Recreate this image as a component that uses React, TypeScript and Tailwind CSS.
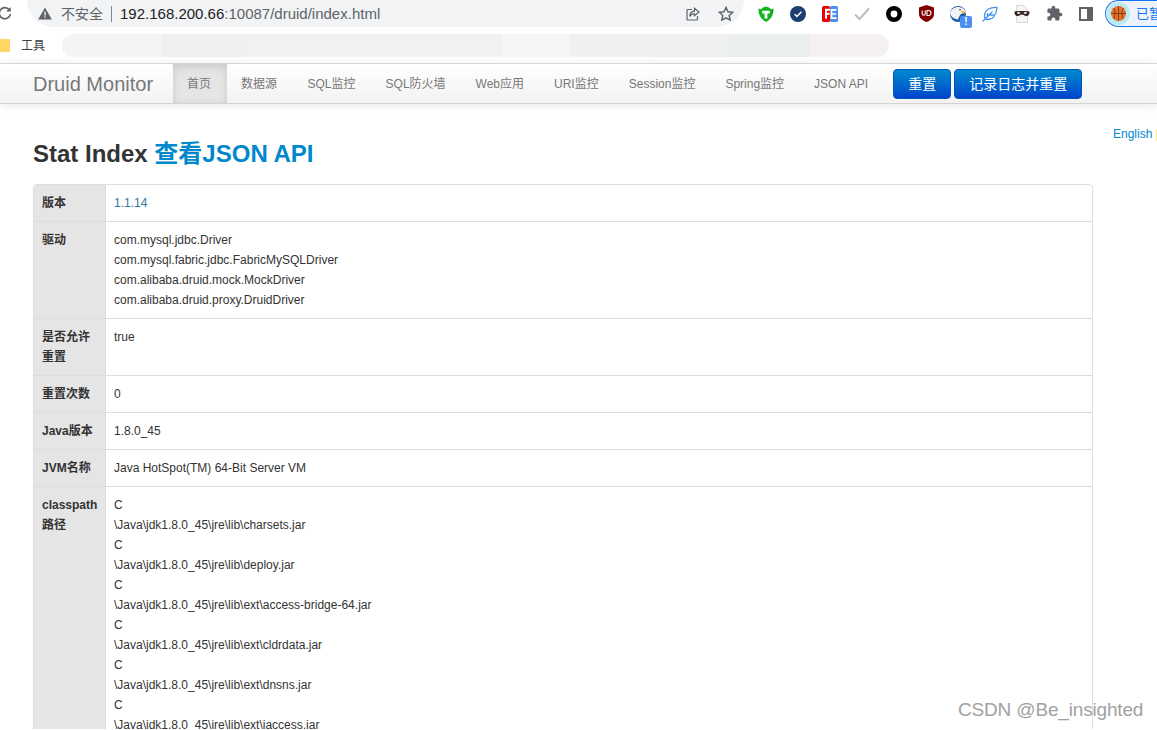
import React from "react";

const FONT = "font-['Liberation_Sans','Noto_Sans_CJK_SC',Arial,sans-serif]";

const tabs = ["首页", "数据源", "SQL监控", "SQL防火墙", "Web应用", "URI监控", "Session监控", "Spring监控", "JSON API"];

const Row = ({ label, lines, blue }: { label: string[]; lines: string[]; blue?: boolean }) => (
  <div className="flex border-t border-[#dddddd] first:border-t-0">
    <div className="w-[72px] shrink-0 bg-[#e5e5e5] p-2 border-r border-[#dddddd] font-bold">
      {label.map((l) => (
        <div key={l}>{l}</div>
      ))}
    </div>
    <div className={"flex-1 p-2 " + (blue ? "text-[#33779f]" : "")}>
      {lines.map((l, i) => (
        <div key={i}>{l}</div>
      ))}
    </div>
  </div>
);

const jars = ["charsets.jar", "deploy.jar", "ext\\access-bridge-64.jar", "ext\\cldrdata.jar", "ext\\dnsns.jar", "ext\\jaccess.jar"];
const cp = jars.flatMap((j) => ["C", "\\Java\\jdk1.8.0_45\\jre\\lib\\" + j]);

const Cell = ({ children }: { children: React.ReactNode }) => (
  <div className="flex h-[27px] w-[32px] shrink-0 items-center justify-center">{children}</div>
);

export default function App() {
  return (
    <div className={"relative h-[729px] w-[1157px] overflow-hidden bg-white text-[12px] leading-5 text-[#333333] " + FONT}>
      {/* browser toolbar */}
      <div className="flex h-[28px] items-start bg-white">
        <svg width="14" height="14" viewBox="0 0 14 14" className="-ml-[2px] mr-[15px] mt-[6px] shrink-0">
          <path d="M11.6 4.2A5.6 5.6 0 1 0 12.4 8" fill="none" stroke="#5f6368" strokeWidth="1.7" />
          <path d="M12.8 1v4.6H8.2z" fill="#5f6368" />
        </svg>
        <div className="flex h-[27px] w-[717px] shrink-0 items-center rounded-b-full rounded-t-[10px] bg-[#f1f3f4] pl-[11px] pr-[10px]">
          <svg width="14" height="13" viewBox="0 0 14 13" className="shrink-0">
            <path d="M7 0.5 13.8 12.5H0.2z" fill="#5f6368" />
            <rect x="6.3" y="4.5" width="1.4" height="4" fill="#f1f3f4" />
            <rect x="6.3" y="9.4" width="1.4" height="1.4" fill="#f1f3f4" />
          </svg>
          <span className="ml-[9px] text-[14px] leading-none text-[#5f6368]">不安全</span>
          <span className="ml-[8px] mr-[8px] h-[16px] w-px bg-[#80868b]" />
          <span className="text-[15px] leading-none text-[#202124]">192.168.200.66</span>
          <span className="text-[15px] leading-none text-[#5f6368]">:10087/druid/index.html</span>
          <div className="ml-auto flex items-center gap-[18px]">
            <svg width="14" height="14" viewBox="0 0 14 14" fill="none" stroke="#5f6368" strokeWidth="1.2">
              <path d="M6 2.5H2a1 1 0 0 0-1 1V12a1 1 0 0 0 1 1h8.5a1 1 0 0 0 1-1V9" />
              <path d="M8.5 1.2 13 5l-4.5 3.8V6.8C6 6.8 4.6 7.7 3.8 9.6c0-3.2 1.6-5.2 4.7-5.5z" />
            </svg>
            <svg width="16" height="15" viewBox="0 0 16 15" fill="none" stroke="#5f6368" strokeWidth="1.4">
              <path d="M8 1.4 10 5.8l4.7.5-3.5 3.2 1 4.7L8 11.8l-4.2 2.4 1-4.7L1.3 6.3 6 5.8z" />
            </svg>
          </div>
        </div>
        <div className="ml-[6px] flex shrink-0">
          <Cell>
            <svg width="16" height="16" viewBox="0 0 16 16">
              <path d="M0.500 2.500 3 3.200 5 1.500 8 0.500 11 1.500 13 3.200 15.500 2.500C15.800 9 13 13 8 16 3 13 .2 9 .5 2.500z" fill="#12b41e" />
              <path d="M4.200 4.800h7.600v2.600H9.400V12.500H6.600V7.400H4.200z" fill="#ffffff" />
            </svg>
          </Cell>
          <Cell>
            <svg width="16" height="16" viewBox="0 0 16 16">
              <circle cx="8" cy="8" r="8" fill="#1b3f6e" />
              <path d="M4.600 8.200 7 10.400l4.400-4.600" fill="none" stroke="#ffffff" strokeWidth="1.500" />
            </svg>
          </Cell>
          <Cell>
            <svg width="16" height="16" viewBox="0 0 16 16">
              <rect width="8" height="16" rx="1.500" fill="#f00000" />
              <rect x="8" width="8" height="16" rx="1.500" fill="#4d8ff0" />
              <path d="M3 3.800h5M4 3.800v9M4 7.800h3.500" stroke="#ffffff" strokeWidth="2" fill="none" />
              <path d="M14.500 3.800H9.500v8.400h5M9.500 8h4.500" stroke="#ffffff" strokeWidth="1.700" fill="none" />
            </svg>
          </Cell>
          <Cell>
            <svg width="16" height="14" viewBox="0 0 16 14">
              <path d="M1 7.500 5.500 12 15 1.500" fill="none" stroke="#bdbdbd" strokeWidth="2" />
            </svg>
          </Cell>
          <Cell>
            <svg width="16" height="16" viewBox="0 0 16 16">
              <circle cx="8" cy="8" r="5.700" fill="none" stroke="#000000" strokeWidth="4.600" />
            </svg>
          </Cell>
          <Cell>
            <svg width="15" height="17" viewBox="0 0 15 17">
              <path d="M7.500 0 15 2.500V9c0 4-3.500 6.500-7.500 8C3.500 15.500 0 13 0 9V2.500z" fill="#800000" />
              <path d="M3.200 5.500v3.300a1.500 1.500 0 0 0 3 0V5.500M8 5.500v5h1.500a2.500 2.500 0 0 0 0-5z" fill="none" stroke="#ffffff" strokeWidth="1.100" />
            </svg>
          </Cell>
          <Cell>
            <span className="relative block h-[16px] w-[16px]">
              <svg width="16" height="16" viewBox="0 0 16 16">
                <circle cx="8" cy="8" r="8" fill="#1d5cb0" />
                <path d="M0 7C1 3 5 .5 9 1c3 .3 5 2 6 4l1 2-4 .5c-2 .5-3 4-4 6C4 13 1 11 0 7z" fill="#f2f2f2" />
                <path d="M10.500 4.500 16 6.500l-3 1.300z" fill="#f0a020" />
                <circle cx="10" cy="3.800" r=".8" fill="#1d2a44" />
              </svg>
              <span className="absolute -bottom-[6px] left-[10px] flex h-[12px] w-[12px] items-center justify-center rounded-[2px] bg-[#4d8ff0] text-[10px] font-bold leading-none text-white">!</span>
            </span>
          </Cell>
          <Cell>
            <svg width="16" height="16" viewBox="0 0 16 16" fill="none" stroke="#3f93f0" strokeWidth="1.300">
              <path d="M15 1.500C8.500 1 2.500 4 2.500 10c0 2 1 3.500 3 3.500C11.500 13.500 14.500 8 15 1.500z" />
              <path d="M.5 15.500 10.500 5.500M5.500 7v4.500M7.500 9h4.500" />
            </svg>
          </Cell>
          <Cell>
            <svg width="16" height="18" viewBox="0 0 16 18">
              <path d="M2.500 .5h7.500l3.500 3.500v13.500h-11z" fill="#f4f4f4" stroke="#dadada" />
              <path d="M.5 6.500c3-.8 12-.8 15 0 0 2.800-.8 4.500-3.200 4.500-1.800 0-2.800-1.500-4.300-1.500S5.500 11 3.700 11C1.300 11 .5 9.300.5 6.500z" fill="#33201c" />
              <ellipse cx="4.700" cy="8" rx="1.700" ry=".9" fill="#e6e0dc" />
              <ellipse cx="11.300" cy="8" rx="1.700" ry=".9" fill="#e6e0dc" />
            </svg>
          </Cell>
          <Cell>
            <svg width="17" height="17" viewBox="0 0 24 24">
              <path d="M20.500 11H19V7c0-1.100-.9-2-2-2h-4V3.500C13 2.120 11.880 1 10.500 1S8 2.120 8 3.500V5H4c-1.100 0-1.990.9-1.990 2v3.800H3.500c1.490 0 2.700 1.210 2.700 2.700s-1.210 2.700-2.700 2.700H2V20c0 1.100.9 2 2 2h3.800v-1.500c0-1.490 1.210-2.700 2.700-2.700 1.490 0 2.700 1.210 2.700 2.700V22H17c1.100 0 2-.9 2-2v-4h1.500c1.380 0 2.500-1.120 2.500-2.500S21.880 11 20.500 11z" fill="#5f6368" />
            </svg>
          </Cell>
          <Cell>
            <svg width="14" height="14" viewBox="0 0 14 14">
              <path d="M0 0h14v14H0zM2 2v10h6V2z" fill="#5f6368" fillRule="evenodd" />
            </svg>
          </Cell>
        </div>
        <div className="ml-[3px] flex h-[27px] w-[52px] shrink-0 items-center overflow-hidden rounded-l-full border-[1.5px] border-r-0 border-[#1a73e8] bg-[#edf3fe] pl-[1px]">
          <span className="flex h-[23px] w-[23px] shrink-0 items-center justify-center rounded-full bg-[#b9eaf2]">
            <svg width="15" height="15" viewBox="0 0 15 15">
              <circle cx="7.500" cy="7.500" r="7.500" fill="#e8702a" />
              <path d="M7.500 0v15M0 7.500h15M2.500 2c2 2 2 9 0 11M12.500 2c-2 2-2 9 0 11" fill="none" stroke="#5a2a12" strokeWidth=".7" />
            </svg>
          </span>
          <span className="ml-[6px] whitespace-nowrap text-[13px] leading-none text-[#1a73e8]">已暂</span>
        </div>
      </div>

      {/* bookmarks */}
      <div className="flex h-[36px] items-center border-b border-[#e0e0e0] bg-white">
        <div className="h-[13px] w-[10px] shrink-0 rounded-[1px] bg-[#fdd663]" />
        <span className="ml-[11px] text-[12px] text-[#3c4043]">工具</span>
        <div className="ml-[18px] h-[13px] w-[10px] shrink-0 rounded-[1px] bg-[#fdd663]" />
        <div className="-ml-[11px] flex h-[23px] w-[827px] shrink-0 overflow-hidden rounded-full">
          <div className="w-[100px] bg-[#f4f4f3]" />
          <div className="w-[80px] bg-[#efefee]" />
          <div className="w-[260px] bg-[#f1f1f0]" />
          <div className="w-[68px] bg-[#f5f5f4]" />
          <div className="w-[80px] bg-[#f0f0ef]" />
          <div className="w-[80px] bg-[#eef0ee]" />
          <div className="w-[80px] bg-[#ebefec]" />
          <div className="flex-1 bg-[#f6f1f1]" />
        </div>
      </div>

      {/* nav */}
      <div className="flex h-[40px] items-center border-b border-[#d4d4d4] bg-gradient-to-b from-white to-[#f2f2f2] pl-[33px] shadow-[0_1px_10px_rgba(0,0,0,0.1)]">
        <span className="w-[140px] shrink-0 text-[20px] leading-none text-[#777777]">Druid Monitor</span>
        {tabs.map((t, i) => (
          <span
            key={t}
            className={
              "flex h-[39px] shrink-0 items-center text-[12px] text-[#777777] " +
              (i === 0
                ? "pl-[14px] pr-[15.5px] bg-[#e5e5e5] text-[#555555] shadow-[inset_0_3px_8px_rgba(0,0,0,0.125)]"
                : i === 1
                  ? "pl-[14.5px] pr-[15.5px]"
                  : "px-[15px]")
            }
          >
            {t}
          </span>
        ))}
        <button className="ml-[10px] h-[30px] w-[58px] shrink-0 rounded-[4px] border border-[#0055bb] bg-gradient-to-b from-[#0088cc] to-[#0044cc] text-[14px] leading-none text-white">重置</button>
        <button className="ml-[3px] h-[30px] w-[128px] shrink-0 rounded-[4px] border border-[#0055bb] bg-gradient-to-b from-[#0088cc] to-[#0044cc] text-[14px] leading-none text-white">记录日志并重置</button>
      </div>

      {/* page content */}
      <div className="flex pl-[33px]">
        <div className="w-[1060px] shrink-0">
          <h3 className="mt-[32px] mb-[12px] text-[24px] font-bold leading-[36px] text-[#333333]">
            Stat Index <span className="text-[#0088cc]">查看JSON API</span>
          </h3>
          <div className="overflow-hidden rounded-[4px] border border-[#dddddd]">
            <Row label={["版本"]} lines={["1.1.14"]} blue />
            <Row label={["驱动"]} lines={["com.mysql.jdbc.Driver", "com.mysql.fabric.jdbc.FabricMySQLDriver", "com.alibaba.druid.mock.MockDriver", "com.alibaba.druid.proxy.DruidDriver"]} />
            <Row label={["是否允许", "重置"]} lines={["true"]} />
            <Row label={["重置次数"]} lines={["0"]} />
            <Row label={["Java版本"]} lines={["1.8.0_45"]} />
            <Row label={["JVM名称"]} lines={["Java HotSpot(TM) 64-Bit Server VM"]} />
            <Row label={["classpath", "路径"]} lines={cp} />
          </div>
        </div>
        <div className="ml-[20px] mt-[20px] shrink-0 whitespace-nowrap text-[#0088cc]">
          English <span className="text-[#f0a040]">|</span>
        </div>
      </div>

      {/* watermark */}
      <div className="absolute left-[958px] top-[698px] whitespace-nowrap text-[19px] leading-6 tracking-[-0.17px] text-[#8a8a8a] opacity-80">CSDN @Be_insighted</div>
    </div>
  );
}
